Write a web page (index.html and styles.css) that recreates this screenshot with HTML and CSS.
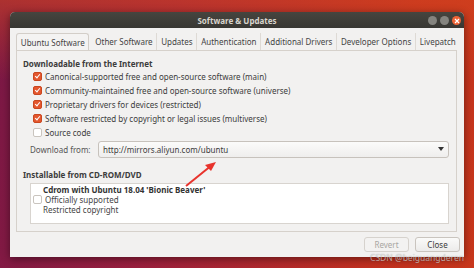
FILE: index.html
```html
<!DOCTYPE html>
<html>
<head>
    <title>Software &amp; Updates</title>
    <meta name="viewport" content="width=device-width, initial-scale=1">
    <link rel="stylesheet" href="styles.css">
</head>
<body>
    <div class="window">
        <div class="titlebar">
            <span class="title">Software &amp; Updates</span>
            <div class="controls">
                <span class="ctl min"></span>
                <span class="ctl max"></span>
                <span class="ctl close">
                    <svg width="6" height="6" viewBox="0 0 6 6"><path d="M1 1L5 5M5 1L1 5" stroke="#fff" stroke-width="1.2"/></svg>
                </span>
            </div>
        </div>

        <div class="tabs">
            <div class="tab active">Ubuntu Software</div>
            <div class="tab">Other Software</div>
            <div class="tab">Updates</div>
            <div class="tab">Authentication</div>
            <div class="tab">Additional Drivers</div>
            <div class="tab">Developer Options</div>
            <div class="tab">Livepatch</div>
        </div>

        <div class="panel">
            <div class="section-title">Downloadable from the Internet</div>
            <ul class="checklist">
                <li><span class="check on"></span>Canonical-supported free and open-source software (main)</li>
                <li><span class="check on"></span>Community-maintained free and open-source software (universe)</li>
                <li><span class="check on"></span>Proprietary drivers for devices (restricted)</li>
                <li><span class="check on"></span>Software restricted by copyright or legal issues (multiverse)</li>
                <li><span class="check"></span>Source code</li>
            </ul>

            <div class="download-row">
                <label>Download from:</label>
                <div class="combo">
                    <span>http://mirrors.aliyun.com/ubuntu</span>
                    <span class="arrow-down"></span>
                </div>
            </div>

            <div class="section-title cd">Installable from CD-ROM/DVD</div>
            <div class="cd-box">
                <div class="cd-name">Cdrom with Ubuntu 18.04 'Bionic Beaver'</div>
                <div class="cd-line"><span class="check"></span>Officially supported</div>
                <div class="cd-line plain">Restricted copyright</div>
            </div>
        </div>

        <div class="buttons">
            <button class="btn" disabled>Revert</button>
            <button class="btn">Close</button>
        </div>
    </div>

    <svg class="red-arrow" width="40" height="32" viewBox="0 0 40 32">
        <path d="M10 30L36 9" stroke="#e8332c" stroke-width="2"/>
        <path d="M40 6L29 9L35 15Z" fill="#e8332c"/>
    </svg>

    <div class="watermark">CSDN @beiguangderen</div>
</body>
</html>
```

FILE: styles.css
```css
body {
    margin: 0;
    width: 474px;
    height: 268px;
    padding: 12px 0 0 10px;
    box-sizing: border-box;
    overflow: hidden;
    position: relative;
    font-family: "Noto Sans", "Open Sans", sans-serif;
    font-size: 8px;
    color: #3c3c3c;
    background:
        linear-gradient(180deg, rgba(214, 70, 30, 0.55) 0%, rgba(214, 70, 30, 0) 30%),
        linear-gradient(100deg, #7a1846 0%, #9a1f3e 35%, #c2301f 80%, #c8371c 100%);
}
.window {
    width: 454px;
    height: 245px;
    background: #f2f1f0;
    border-radius: 5px 5px 0 0;
    box-shadow: 0 2px 8px rgba(0, 0, 0, 0.45);
    display: flex;
    flex-direction: column;
}
.titlebar {
    height: 16px;
    flex-shrink: 0;
    background: linear-gradient(#46453f, #383733);
    border-radius: 5px 5px 0 0;
    display: flex;
    align-items: center;
    justify-content: center;
    position: relative;
}
.title {
    color: #d8d4cc;
    font-weight: bold;
    font-size: 8px;
}
.controls {
    position: absolute;
    right: 3px;
    top: 4px;
    display: flex;
    gap: 3px;
}
.ctl {
    width: 9px;
    height: 9px;
    border-radius: 50%;
    background: #85847f;
    display: flex;
    align-items: center;
    justify-content: center;
}
.ctl.close {
    background: #ee6436;
}
.tabs {
    display: flex;
    align-items: flex-end;
    height: 22px;
    padding-left: 6px;
    flex-shrink: 0;
}
.tab {
    height: 17px;
    line-height: 17px;
    padding: 0 3.8px;
    border-right: 1px solid #dedad5;
    white-space: nowrap;
    color: #444;
    font-size: 8px;
}
.tab:last-child {
    border-right: none;
}
.tab.active {
    border: 1px solid #d3cec8;
    border-bottom: none;
    border-radius: 3px 3px 0 0;
    background: #f4f3f2;
    height: 16px;
    margin-right: 2px;
}
.panel {
    margin: 0 7px 0 6px;
    height: 182px;
    border: 1px solid #d6d1cb;
    padding: 6px 7px 0 6px;
    box-sizing: border-box;
}
.section-title {
    font-weight: bold;
    color: #3c3c3c;
    height: 13px;
    line-height: 13px;
}
.checklist {
    list-style: none;
    margin: -1px 0 0 0;
    padding: 0 0 0 10px;
}
.checklist li {
    height: 14.2px;
    display: flex;
    align-items: center;
    color: #3c3c3c;
}
.check {
    width: 7px;
    height: 7px;
    border: 1px solid #c9c4be;
    border-radius: 2px;
    background: #fff;
    margin-right: 3px;
    flex-shrink: 0;
    position: relative;
}
.check.on {
    background: #e4572e;
    border-color: #c9471f;
}
.check.on::after {
    content: "";
    position: absolute;
    left: 2px;
    top: 0;
    width: 2px;
    height: 4px;
    border: solid #fff;
    border-width: 0 1.3px 1.3px 0;
    transform: rotate(40deg);
}
.download-row {
    display: flex;
    align-items: center;
    margin-top: 1px;
    padding-left: 7px;
}
.download-row label {
    color: #555;
    width: 68px;
}
.combo {
    flex: 1;
    height: 17px;
    border: 1px solid #c7c2bc;
    border-radius: 3px;
    background: linear-gradient(#fbfbfa, #efeeed);
    display: flex;
    align-items: center;
    justify-content: space-between;
    padding: 0 4px;
    box-sizing: border-box;
    color: #3c3c3c;
}
.arrow-down {
    width: 0;
    height: 0;
    border-left: 3px solid transparent;
    border-right: 3px solid transparent;
    border-top: 4px solid #333;
}
.section-title.cd {
    margin-top: 10px;
}
.cd-box {
    margin: 2px 0 0 7px;
    height: 41px;
    background: #fff;
    border: 1px solid #d8d4cf;
    padding: 1px 0 0 2px;
    box-sizing: border-box;
}
.cd-name {
    font-weight: bold;
    padding-left: 10px;
    height: 10px;
    line-height: 10px;
    color: #333;
}
.cd-line {
    display: flex;
    align-items: center;
    height: 10px;
    color: #444;
}
.cd-line.plain {
    padding-left: 10px;
}
.buttons {
    display: flex;
    justify-content: flex-end;
    gap: 6px;
    padding: 5px 4px 0 0;
}
.btn {
    width: 45px;
    height: 15px;
    font-family: inherit;
    font-size: 8px;
    color: #3c3c3c;
    border: 1px solid #c9c4be;
    border-radius: 3px;
    background: linear-gradient(#fafaf9, #ecebea);
    padding: 0;
}
.btn:disabled {
    color: #a9a6a2;
    background: #f3f2f1;
    border-color: #d6d2cd;
}
.red-arrow {
    position: absolute;
    left: 176px;
    top: 156px;
}
.watermark {
    position: absolute;
    right: 10px;
    bottom: 5px;
    font-size: 8.5px;
    color: rgba(255, 255, 255, 0.6);
    text-shadow: 0 0 1px rgba(0, 0, 0, 0.4);
}
```
